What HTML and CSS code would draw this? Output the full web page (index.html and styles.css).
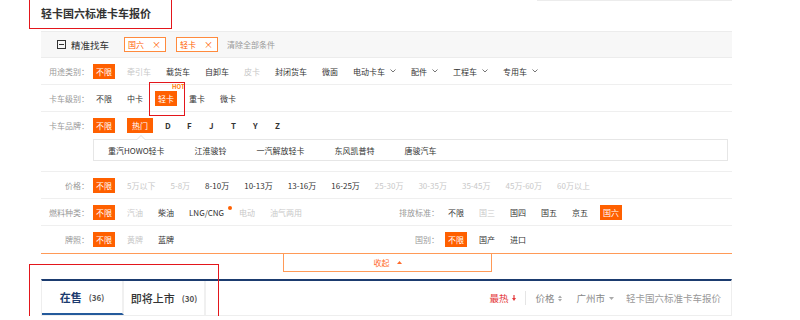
FILE: index.html
```html
<!DOCTYPE html>
<html lang="zh">
<head>
    <meta charset="UTF-8">
    <meta name="viewport" content="width=device-width, initial-scale=1.0">
    <title>轻卡国六标准卡车报价</title>
    <link rel="stylesheet" href="styles.css">
</head>
<body>
    <div class="top-line"></div>
    <h1 class="page-title">轻卡国六标准卡车报价</h1>

    <div class="filter">
        <div class="filter-head">
            <svg class="fold-icon" width="9" height="9" viewBox="0 0 9 9"><rect x="0.5" y="0.5" width="8" height="8" fill="none" stroke="#333"/><path d="M2 4.5h5" stroke="#333"/></svg>
            <span class="head-name">精准找车</span>
            <span class="chosen">国六<i>×</i></span>
            <span class="chosen">轻卡<i>×</i></span>
            <span class="clear-all">清除全部条件</span>
        </div>

        <div class="row">
            <div class="label">用途类别：</div>
            <div class="opts">
                <span class="opt on">不限</span>
                <span class="opt off">牵引车</span>
                <span class="opt">载货车</span>
                <span class="opt">自卸车</span>
                <span class="opt off">皮卡</span>
                <span class="opt">封闭货车</span>
                <span class="opt">微面</span>
                <span class="opt">电动卡车<svg class="arr" width="6" height="4" viewBox="0 0 6 4"><path d="M0.5 0.5L3 3L5.5 0.5" fill="none" stroke="#777"/></svg></span>
                <span class="opt">配件<svg class="arr" width="6" height="4" viewBox="0 0 6 4"><path d="M0.5 0.5L3 3L5.5 0.5" fill="none" stroke="#777"/></svg></span>
                <span class="opt">工程车<svg class="arr" width="6" height="4" viewBox="0 0 6 4"><path d="M0.5 0.5L3 3L5.5 0.5" fill="none" stroke="#777"/></svg></span>
                <span class="opt">专用车<svg class="arr" width="6" height="4" viewBox="0 0 6 4"><path d="M0.5 0.5L3 3L5.5 0.5" fill="none" stroke="#777"/></svg></span>
            </div>
        </div>

        <div class="row">
            <div class="label">卡车级别：</div>
            <div class="opts">
                <span class="opt">不限</span>
                <span class="opt">中卡</span>
                <span class="opt on has-tag">轻卡<b class="hot-tag">HOT</b></span>
                <span class="opt">重卡</span>
                <span class="opt">微卡</span>
            </div>
        </div>

        <div class="row brand">
            <div class="row-line">
                <div class="label">卡车品牌：</div>
                <div class="opts">
                    <span class="opt on">不限</span>
                    <span class="opt on hot-tab">热门</span>
                    <span class="opt letter">D</span>
                    <span class="opt letter">F</span>
                    <span class="opt letter">J</span>
                    <span class="opt letter">T</span>
                    <span class="opt letter">Y</span>
                    <span class="opt letter">Z</span>
                </div>
            </div>
            <div class="brand-box">
                <span>重汽HOWO轻卡</span>
                <span>江淮骏铃</span>
                <span>一汽解放轻卡</span>
                <span>东风凯普特</span>
                <span>唐骏汽车</span>
            </div>
        </div>

        <div class="row">
            <div class="label">价格：</div>
            <div class="opts">
                <span class="opt on">不限</span>
                <span class="opt off">5万以下</span>
                <span class="opt off">5-8万</span>
                <span class="opt">8-10万</span>
                <span class="opt">10-13万</span>
                <span class="opt">13-16万</span>
                <span class="opt">16-25万</span>
                <span class="opt off">25-30万</span>
                <span class="opt off">30-35万</span>
                <span class="opt off">35-45万</span>
                <span class="opt off">45万-60万</span>
                <span class="opt off">60万以上</span>
            </div>
        </div>

        <div class="row">
            <div class="half">
                <div class="label">燃料种类：</div>
                <div class="opts">
                    <span class="opt on">不限</span>
                    <span class="opt off">汽油</span>
                    <span class="opt">柴油</span>
                    <span class="opt has-tag">LNG/CNG<i class="dot"></i></span>
                    <span class="opt off">电动</span>
                    <span class="opt off">油气两用</span>
                </div>
            </div>
            <div class="half right">
                <div class="label">排放标准：</div>
                <div class="opts">
                    <span class="opt">不限</span>
                    <span class="opt off">国三</span>
                    <span class="opt">国四</span>
                    <span class="opt">国五</span>
                    <span class="opt">京五</span>
                    <span class="opt on">国六</span>
                </div>
            </div>
        </div>

        <div class="row last">
            <div class="half">
                <div class="label">牌照：</div>
                <div class="opts">
                    <span class="opt on">不限</span>
                    <span class="opt off">黄牌</span>
                    <span class="opt">蓝牌</span>
                </div>
            </div>
            <div class="half right">
                <div class="label">国别：</div>
                <div class="opts">
                    <span class="opt on">不限</span>
                    <span class="opt">国产</span>
                    <span class="opt">进口</span>
                </div>
            </div>
        </div>
    </div>

    <div class="collapse-bar">
        <div class="collapse-btn">
            <span>收起</span>
            <svg width="5" height="3" viewBox="0 0 5 3"><path d="M0 3L2.5 0L5 3Z" fill="#ff6a2a"/></svg>
        </div>
    </div>

    <div class="tabs">
        <div class="tab active"><b>在售</b><em>(36)</em></div>
        <div class="tab"><b>即将上市</b><em>(30)</em></div>
        <div class="sorts">
            <span class="sort hot">最热<svg width="4" height="6" viewBox="0 0 4 6"><path d="M2 0V4" stroke="#e4393c" stroke-width="1.2"/><path d="M0 3H4L2 6Z" fill="#e4393c"/></svg></span>
            <span class="split"></span>
            <span class="sort">价格<svg width="4" height="7" viewBox="0 0 4 7"><path d="M0 3L2 0.5L4 3Z M0 4L2 6.5L4 4Z" fill="#aaa"/></svg></span>
            <span class="sort">广州市<svg width="5" height="3" viewBox="0 0 5 3"><path d="M0 0H5L2.5 3Z" fill="#aaa"/></svg></span>
            <span class="sort name">轻卡国六标准卡车报价</span>
        </div>
    </div>

    <div class="mark mark-title"></div>
    <div class="mark mark-hot"></div>
    <div class="mark mark-tabs"></div>
</body>
</html>
```

FILE: styles.css
```css
html, body {
    overflow: hidden;
}
body {
    margin: 0;
    position: relative;
    background: #fff;
    color: #333;
    font-family: "Noto Sans CJK SC", "Liberation Sans", sans-serif;
    font-size: 8px;
}
.top-line {
    margin-left: 537px;
    width: 195px;
    height: 1px;
    background: #ececec;
}
.page-title {
    margin: 0 0 0 41px;
    height: 30px;
    line-height: 25px;
    font-size: 11px;
    font-weight: bold;
    color: #333;
}

.filter {
    margin-left: 41px;
    width: 691px;
}
.filter-head {
    display: flex;
    align-items: center;
    height: 25px;
    padding-left: 16px;
    background: #f7f7f7;
    border-top: 1px solid #ececec;
    border-bottom: 1px solid #ececec;
}
.fold-icon {
    margin-right: 5px;
}
.head-name {
    font-size: 9.5px;
    color: #333;
    margin-right: 15px;
}
.chosen {
    display: flex;
    align-items: center;
    height: 15px;
    box-sizing: border-box;
    padding: 0 4px 0 3px;
    margin-right: 10px;
    border: 1px solid #ff8a3d;
    background: #fff;
    color: #ff6000;
}
.chosen i {
    font-style: normal;
    margin-left: 8px;
    font-size: 9px;
}
.clear-all {
    color: #999;
    margin-left: -1px;
}

.row {
    display: flex;
    align-items: center;
    height: 26px;
    border-bottom: 1px solid #efefef;
}
.row.last {
    height: 27px;
    border-bottom: 0;
}
.label {
    flex: none;
    width: 52px;
    padding-right: 4px;
    box-sizing: border-box;
    text-align: right;
    color: #999;
    white-space: nowrap;
}
.opts {
    display: flex;
    align-items: center;
    gap: 9px;
}
.opt {
    display: flex;
    align-items: center;
    padding: 0 3px;
    line-height: 15px;
    white-space: nowrap;
    color: #333;
}
.opt.on {
    background: #ff6000;
    color: #fff;
}
.opt.off {
    color: #c8c8c8;
}
.opt .arr {
    margin-left: 5px;
}
.has-tag {
    position: relative;
}
.hot-tag {
    position: absolute;
    left: 17px;
    top: -7px;
    font-size: 6px;
    line-height: 6px;
    color: #ff7a00;
    font-weight: bold;
}
.dot {
    position: absolute;
    right: -5px;
    top: 1px;
    width: 4px;
    height: 4px;
    border-radius: 50%;
    background: #ff6000;
}

.row.brand {
    display: block;
    height: auto;
    padding-bottom: 10px;
}
.row-line {
    display: flex;
    align-items: center;
    height: 27px;
}
.hot-tab {
    padding: 0 5px;
    margin-left: 3px;
}
.letter {
    width: 7px;
    font-weight: bold;
}
.brand-box {
    position: relative;
    display: flex;
    align-items: center;
    gap: 30px;
    height: 22px;
    box-sizing: border-box;
    margin: 0 4px 0 52px;
    padding-left: 14px;
    border: 1px solid #e6e6e6;
    color: #333;
}
.brand-box::before,
.brand-box::after {
    content: '';
    position: absolute;
    left: 42px;
    top: -10px;
    border: 5px solid transparent;
    border-bottom-color: #e0e0e0;
}
.brand-box::after {
    top: -9px;
    border-bottom-color: #fff;
}

.half {
    display: flex;
    align-items: center;
    width: 349px;
}
.half.right {
    width: auto;
}
.half.right .label {
    width: 55px;
    padding-right: 6px;
}

.collapse-bar {
    margin-left: 41px;
    width: 691px;
    border-top: 1px solid #ff9a57;
}
.collapse-btn {
    display: flex;
    justify-content: center;
    align-items: center;
    gap: 7px;
    margin-left: 242px;
    width: 209px;
    height: 18px;
    box-sizing: border-box;
    border: 1px solid #ff9a57;
    border-top: 0;
    color: #ff6a2a;
}

.tabs {
    display: flex;
    margin: 7px 0 0 41px;
    width: 691px;
    height: 37px;
    box-sizing: border-box;
    border-top: 2px solid #1b3b6f;
    border-left: 1px solid #eee;
    border-right: 1px solid #eee;
    border-bottom: 1px solid #eee;
}
.tab {
    display: flex;
    justify-content: center;
    align-items: center;
    width: 82px;
    box-sizing: border-box;
    border-right: 2px solid #f0f0f0;
    color: #333;
}
.tab.active {
    border-bottom: 2px solid #245a9b;
    color: #1b3b6f;
}
.tab b {
    font-size: 11px;
}
.tab:not(.active) b {
    font-weight: 500;
}
.tab em {
    font-style: normal;
    font-size: 8px;
    font-weight: bold;
    color: #555;
    margin-left: 7px;
}
.sorts {
    display: flex;
    align-items: center;
    margin-left: auto;
    padding-right: 10px;
    font-size: 9.5px;
    color: #888;
}
.sort {
    display: flex;
    align-items: center;
}
.sort svg {
    margin-left: 4px;
}
.sort.hot {
    color: #e4393c;
}
.split {
    width: 1px;
    height: 14px;
    margin: 0 9px;
    background: #e5e5e5;
}
.sort + .sort {
    margin-left: 14px;
}
.sort.name {
    color: #999;
    margin-left: 12px;
}

.mark {
    position: absolute;
    box-sizing: border-box;
    border: 1px solid #e3161b;
}
.mark-title {
    left: 29px;
    top: -2px;
    width: 143px;
    height: 31px;
}
.mark-hot {
    left: 149px;
    top: 82px;
    width: 36px;
    height: 34px;
}
.mark-tabs {
    left: 29px;
    top: 264px;
    width: 190px;
    height: 60px;
}
```
